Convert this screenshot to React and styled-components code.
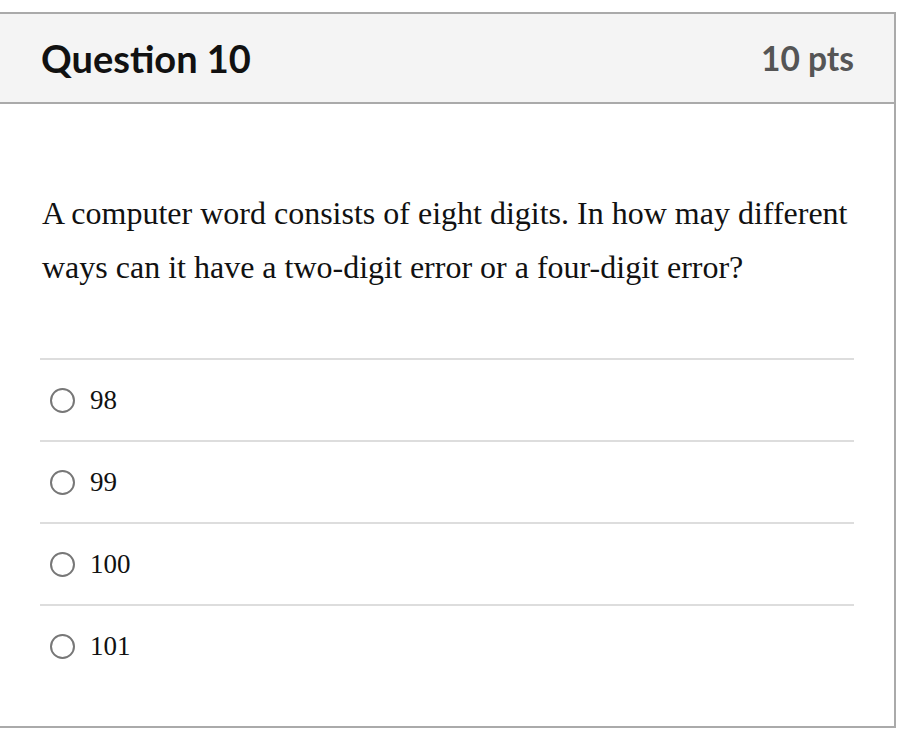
import styled, { createGlobalStyle } from 'styled-components';

const GlobalStyle = createGlobalStyle`
    html, body {
        margin: 0;
        padding: 0;
        background: #fff;
    }
`;

const Card = styled.div`
    width: 894px;
    margin-top: 12px;
    border: 2px solid #aaaaaa;
    border-left: none;
    background: #fff;
`;

const Header = styled.div`
    display: flex;
    justify-content: space-between;
    align-items: center;
    height: 88px;
    padding: 0 40px 0 41px;
    background: #f4f4f4;
    border-bottom: 2px solid #aaaaaa;
    font-family: Lato, "Liberation Sans", sans-serif;
    font-weight: 700;
`;

const Title = styled.h2`
    margin: 0;
    font-size: 38px;
    font-weight: 700;
    color: #111;
`;

const Points = styled.span`
    font-size: 33.5px;
    color: #555;
`;

const Body = styled.div`
    padding: 82px 40px 40px 40px;
`;

const QuestionText = styled.p`
    margin: 0 -6px 64px 2px;
    font-family: "Liberation Serif", "Times New Roman", serif;
    font-size: 32px;
    line-height: 54px;
    color: #111;
`;

const Answers = styled.ul`
    list-style: none;
    margin: 0;
    padding: 0;
`;

const Answer = styled.li`
    display: flex;
    align-items: center;
    gap: 15px;
    height: 80px;
    padding-left: 10px;
    border-top: 2px solid #dddddd;
    font-family: "Liberation Serif", "Times New Roman", serif;
    font-size: 27px;
    color: #111;
`;

const Radio = styled.span`
    width: 21px;
    height: 21px;
    border: 2px solid #777;
    border-radius: 50%;
    flex-shrink: 0;
`;

const options = ['98', '99', '100', '101'];

const App = () => {
    return (
        <>
            <GlobalStyle />
            <Card>
                <Header>
                    <Title>Question 10</Title>
                    <Points>10 pts</Points>
                </Header>
                <Body>
                    <QuestionText>
                        A computer word consists of eight digits. In how may different ways can it have a two-digit error or a four-digit error?
                    </QuestionText>
                    <Answers>
                        {options.map((opt) => (
                            <Answer key={opt}>
                                <Radio />
                                {opt}
                            </Answer>
                        ))}
                    </Answers>
                </Body>
            </Card>
        </>
    );
};

export default App;
